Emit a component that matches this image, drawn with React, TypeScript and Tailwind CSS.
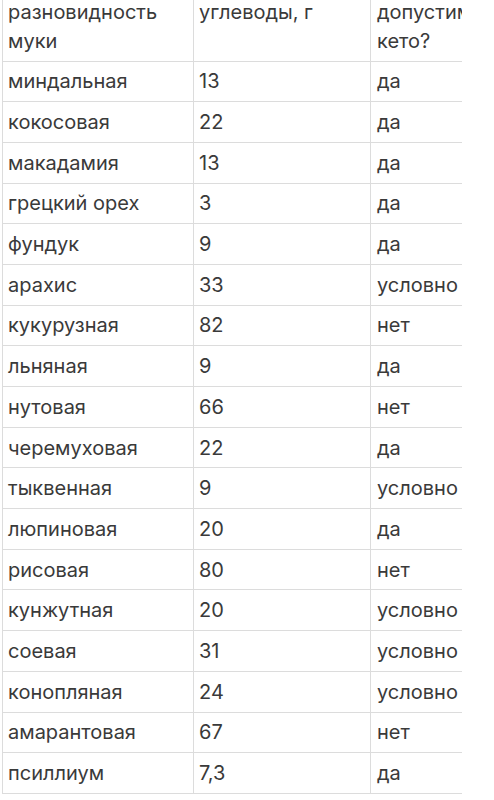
import React from "react";

const rows: [string, string, string][] = [
  ["миндальная", "13", "да"],
  ["кокосовая", "22", "да"],
  ["макадамия", "13", "да"],
  ["грецкий орех", "3", "да"],
  ["фундук", "9", "да"],
  ["арахис", "33", "условно"],
  ["кукурузная", "82", "нет"],
  ["льняная", "9", "да"],
  ["нутовая", "66", "нет"],
  ["черемуховая", "22", "да"],
  ["тыквенная", "9", "условно"],
  ["люпиновая", "20", "да"],
  ["рисовая", "80", "нет"],
  ["кунжутная", "20", "условно"],
  ["соевая", "31", "условно"],
  ["конопляная", "24", "условно"],
  ["амарантовая", "67", "нет"],
  ["псиллиум", "7,3", "да"],
];

const App = () => {
  return (
    <div
      className="h-[800px] w-[494px] overflow-hidden bg-white text-[20px] text-[#3a3a3a]"
      style={{ fontFamily: "Inter, 'Noto Sans', sans-serif" }}
    >
      <div className="-mt-[2px] ml-[2px] w-[460px] overflow-hidden border-l border-[#dcdcdc]">
        {/* header */}
        <div className="grid h-[63.5px] grid-cols-[191px_177px_1fr] border-b border-[#dcdcdc] leading-[28.5px]">
          <div className="border-r border-[#dcdcdc] pl-[5px]">
            разновидность
            <br />
            муки
          </div>
          <div className="border-r border-[#dcdcdc] pl-[5px]">углеводы, г</div>
          <div className="whitespace-nowrap pl-[6px]">
            допустимость на
            <br />
            кето?
          </div>
        </div>

        {rows.map(([name, carbs, keto]) => (
          <div
            key={name}
            className="grid h-[40.7px] grid-cols-[191px_177px_1fr] border-b border-[#dcdcdc]"
          >
            <div className="flex items-center border-r border-[#dcdcdc] pl-[5px]">{name}</div>
            <div className="flex items-center border-r border-[#dcdcdc] pl-[5px]">{carbs}</div>
            <div className="flex items-center whitespace-nowrap pl-[6px]">{keto}</div>
          </div>
        ))}
      </div>
    </div>
  );
};

export default App;
